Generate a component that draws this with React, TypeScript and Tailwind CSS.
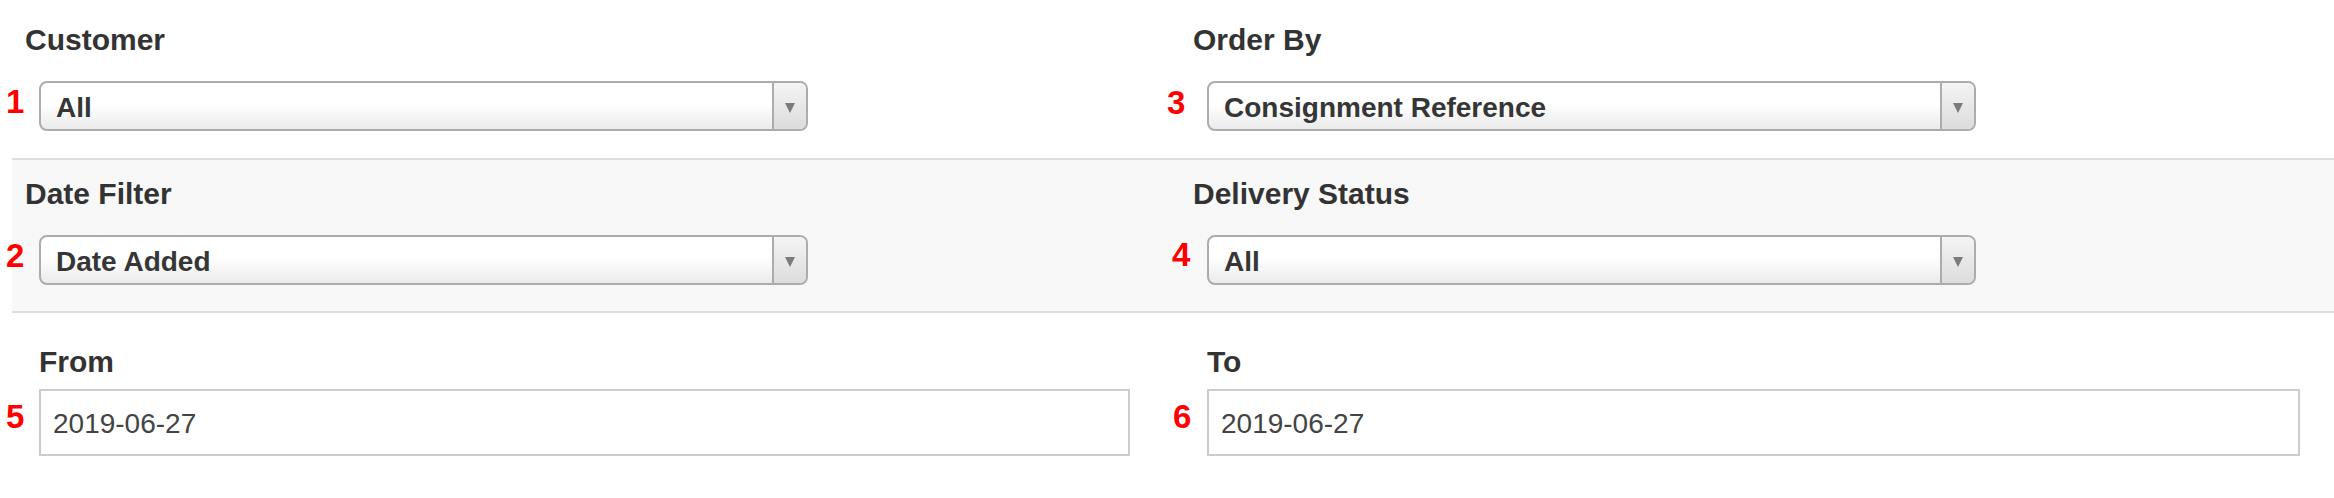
import React from "react";

function Arrow() {
  return (
    <svg width="10" height="10" viewBox="0 0 10 10" className="mt-[3px]">
      <polygon points="0,0 10,0 5,10" fill="#7a7a7a" />
    </svg>
  );
}

function Num({ n, cls }: { n: string; cls: string }) {
  return (
    <span
      className={
        "absolute text-[33px] leading-[33px] font-bold text-[#ff0000] " + cls
      }
    >
      {n}
    </span>
  );
}

function SelectBox({
  value,
  n,
  numCls,
}: {
  value: string;
  n: string;
  numCls: string;
}) {
  return (
    <div className="relative ml-[14px] w-[769px]">
      <Num n={n} cls={numCls} />
      <div className="flex h-[50px] overflow-hidden rounded-[8px] border-2 border-[#acacac] bg-linear-to-b from-white from-45% to-[#ebebeb]">
        <div className="flex-1 pl-[15px] pt-[11px] text-[28px] leading-[28px] font-bold text-[#363636]">
          {value}
        </div>
        <div className="flex w-[34px] items-center justify-center border-l-2 border-[#acacac] bg-linear-to-b from-[#f4f4f4] to-[#dcdcdc]">
          <Arrow />
        </div>
      </div>
    </div>
  );
}

function InputBox({
  value,
  n,
  numCls,
  w,
}: {
  value: string;
  n: string;
  numCls: string;
  w: string;
}) {
  return (
    <div className={"relative " + w}>
      <Num n={n} cls={numCls} />
      <div className="h-[67px] border-2 border-[#cccccc] bg-white pl-[12px] pt-[19px] text-[28px] leading-[28px] text-[#444444]">
        {value}
      </div>
    </div>
  );
}

function Label({ text }: { text: string }) {
  return (
    <div className="h-[36px] text-[30px] leading-[36px] font-bold text-[#333333]">
      {text}
    </div>
  );
}

export default function App() {
  return (
    <div className="h-[498px] w-[2334px] overflow-hidden bg-white font-['Liberation_Sans',Arial,Helvetica,sans-serif]">
      {/* Row 1 */}
      <div className="flex pl-[12px] pt-[22px] pb-[27px]">
        <div className="w-[1168px] pl-[13px]">
          <Label text="Customer" />
          <div className="mt-[23px]">
            <SelectBox value="All" n="1" numCls="-left-[33px] top-[4px]" />
          </div>
        </div>
        <div className="flex-1 pl-[13px]">
          <Label text="Order By" />
          <div className="mt-[23px]">
            <SelectBox
              value="Consignment Reference"
              n="3"
              numCls="-left-[40px] top-[5px]"
            />
          </div>
        </div>
      </div>

      {/* Row 2 (shaded band) */}
      <div className="ml-[12px] flex border-y-2 border-[#dedede] bg-[#f8f8f8] pt-[16px] pb-[26px]">
        <div className="w-[1168px] pl-[13px]">
          <Label text="Date Filter" />
          <div className="mt-[23px]">
            <SelectBox
              value="Date Added"
              n="2"
              numCls="-left-[33px] top-[4px]"
            />
          </div>
        </div>
        <div className="flex-1 pl-[13px]">
          <Label text="Delivery Status" />
          <div className="mt-[23px]">
            <SelectBox value="All" n="4" numCls="-left-[35px] top-[3px]" />
          </div>
        </div>
      </div>

      {/* Row 3 */}
      <div className="flex pl-[12px] pt-[31px]">
        <div className="w-[1168px] pl-[27px]">
          <Label text="From" />
          <div className="mt-[9px]">
            <InputBox
              value="2019-06-27"
              n="5"
              numCls="-left-[33px] top-[11px]"
              w="w-[1091px]"
            />
          </div>
        </div>
        <div className="flex-1 pl-[27px]">
          <Label text="To" />
          <div className="mt-[9px]">
            <InputBox
              value="2019-06-27"
              n="6"
              numCls="-left-[34px] top-[11px]"
              w="w-[1093px]"
            />
          </div>
        </div>
      </div>
    </div>
  );
}
